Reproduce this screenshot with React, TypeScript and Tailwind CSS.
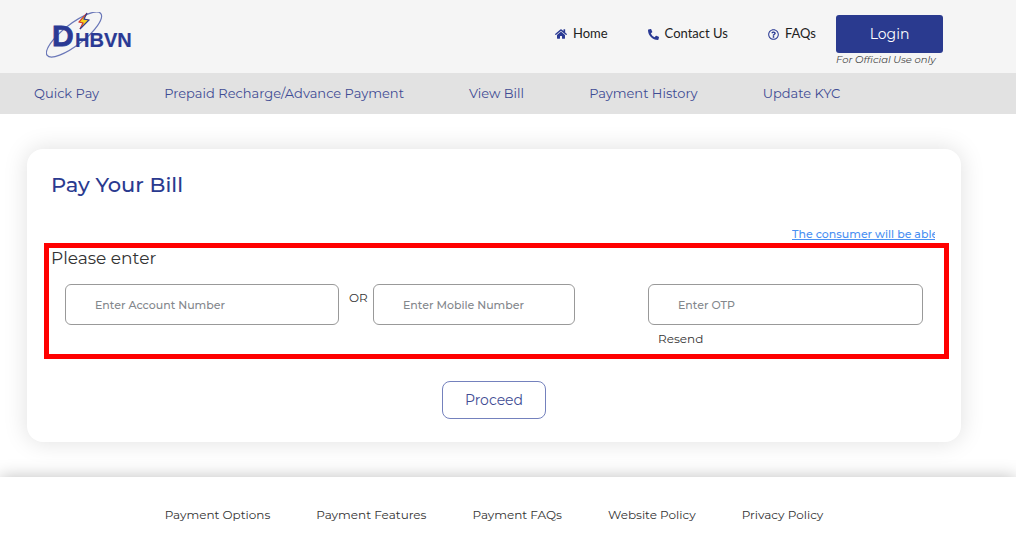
import { FaHome, FaPhoneAlt, FaRegQuestionCircle } from "react-icons/fa";

const navLinks = [
  "Quick Pay",
  "Prepaid Recharge/Advance Payment",
  "View Bill",
  "Payment History",
  "Update KYC",
];

const footerLinks = [
  "Payment Options",
  "Payment Features",
  "Payment FAQs",
  "Website Policy",
  "Privacy Policy",
];

const inputStyle =
  "w-full h-[41px] rounded-md border border-[#999999] bg-white px-[29px] text-[11px] font-medium text-[#333333] placeholder:text-[#83878c] outline-none";

function Logo() {
  return (
    <svg width="90" height="48" viewBox="0 0 90 48" role="img" aria-label="DHBVN">
      <ellipse
        cx="28"
        cy="22.5"
        rx="34"
        ry="10.5"
        transform="rotate(-38 28 22.5)"
        fill="none"
        stroke="#6a77b8"
        strokeWidth="1.2"
      />
      <g fill="#2a3a94" stroke="#2a3a94" fontFamily="Liberation Sans, Arial, sans-serif" fontWeight="700">
        <text x="6" y="34" fontSize="30" strokeWidth="0.8">
          D
        </text>
        <text x="29" y="35" fontSize="20" strokeWidth="0.2">
          HBVN
        </text>
      </g>
      <path d="M41 1l-8 9 4 1-3 6 9-9-5-1z" fill="#f7cf1b" stroke="#7d5a4a" strokeWidth="0.5" />
      <path d="M41 1l-8 9 4 1-3 6" fill="none" stroke="#d8352a" strokeWidth="1.1" />
      <path d="M41 1l-3 6 5 1-9 9" fill="none" stroke="#2a3a94" strokeWidth="1.1" />
    </svg>
  );
}

export default function App() {
  return (
    <div className="font-['Montserrat',Inter,sans-serif] text-[#333333] bg-white">
      <header className="flex items-start justify-between h-[73px] bg-[#f5f5f5] pl-[46px] pr-[73px]">
        <a href="#" className="mt-3">
          <Logo />
        </a>
        <div className="flex items-start font-['Lato',sans-serif] text-[13px] text-[#222222]">
          <div className="flex gap-10 mt-6 mr-5">
            <a href="#" className="flex items-center gap-[6px] h-5">
              <FaHome className="text-[#2a3a94] text-[12px]" />
              Home
            </a>
            <a href="#" className="flex items-center gap-[6px] h-5">
              <FaPhoneAlt className="text-[#2a3a94] text-[11px]" />
              Contact Us
            </a>
            <a href="#" className="flex items-center gap-[6px] h-5">
              <FaRegQuestionCircle className="text-[#2a3a94] text-[11px]" />
              FAQs
            </a>
          </div>
          <div className="mt-[15px] font-['Montserrat',Inter,sans-serif]">
            <button className="block w-[107px] h-[38px] rounded-[3px] bg-[#2a3a8f] text-white text-[14px]">
              Login
            </button>
            <p className="text-[10px] leading-[14px] italic text-[#444444] whitespace-nowrap">
              For Official Use only
            </p>
          </div>
        </div>
      </header>

      <nav className="flex items-center gap-[65px] h-[41px] bg-[#e2e2e2] pl-[34px] text-[13px] text-[#3f4c94] whitespace-nowrap">
        {navLinks.map((link) => (
          <a href="#" key={link}>
            {link}
          </a>
        ))}
      </nav>

      <main className="pt-[35px] pb-[35px] pl-[27px] pr-[55px]">
        <form className="rounded-2xl bg-white pl-[17px] pr-3 pt-5 pb-[23px] shadow-[0_0_24px_rgba(0,0,0,0.13)]">
          <h1 className="pl-[7px] text-[21px] leading-8 font-medium text-[#2a3a8f]">
            Pay Your Bill
          </h1>
          <div className="flex justify-end mt-[25px] pr-[14px]">
            <div className="w-[143px] overflow-hidden whitespace-nowrap text-[11px] leading-[17px] font-medium">
              <a href="#" className="underline text-[#4a90f2]">
                The consumer will be able
              </a>
            </div>
          </div>

          <section className="border-[5px] border-[#ff0000] h-[116px]">
            <h2 className="pl-[2px] text-[17px] leading-5">Please enter</h2>
            <div className="grid grid-cols-[274fr_34fr_202fr_73fr_275fr] mt-4 pl-4 pr-[21px]">
              <input
                className={inputStyle}
                type="text"
                aria-label="Account Number"
                placeholder="Enter Account Number"
              />
              <span className="pl-[10px] pt-[6px] text-[12px] leading-4">OR</span>
              <input
                className={inputStyle}
                type="text"
                aria-label="Mobile Number"
                placeholder="Enter Mobile Number"
              />
              <span></span>
              <div>
                <input
                  className={inputStyle}
                  type="text"
                  aria-label="OTP"
                  placeholder="Enter OTP"
                />
                <button type="button" className="block ml-[10px] mt-[6px] text-[12px] leading-4">
                  Resend
                </button>
              </div>
            </div>
          </section>

          <div className="flex justify-center mt-[22px] pr-[5px]">
            <button
              type="button"
              className="w-[104px] h-[38px] rounded-lg border border-[#7481bd] text-[14px] text-[#3f4c94]"
            >
              Proceed
            </button>
          </div>
        </form>
      </main>

      <footer className="flex justify-center gap-[46px] bg-white pt-[29px] pb-[10px] pr-7 text-[12px] leading-[18px] whitespace-nowrap shadow-[0_0_16px_rgba(0,0,0,0.25)]">
        {footerLinks.map((link) => (
          <a href="#" key={link}>
            {link}
          </a>
        ))}
      </footer>
    </div>
  );
}
